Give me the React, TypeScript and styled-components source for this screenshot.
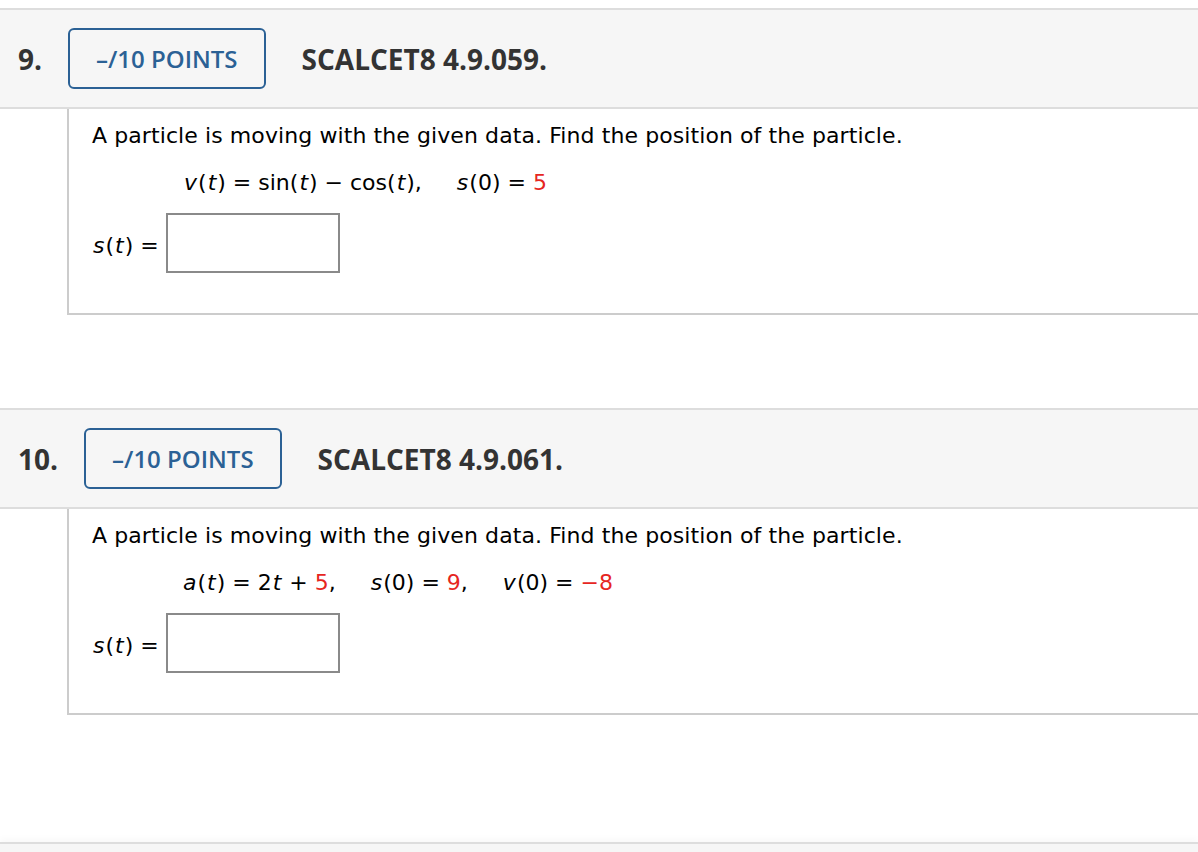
import styled, { createGlobalStyle } from "styled-components";

const GlobalStyle = createGlobalStyle`
  html, body {
    margin: 0;
    padding: 0;
    background: #ffffff;
  }
  body {
    font-family: "DejaVu Sans", Verdana, sans-serif;
  }
`;

const Page = styled.div`
  padding-top: 8px;
  min-height: 852px;
  box-sizing: border-box;
  overflow: hidden;
`;

const Question = styled.section`
  & + & {
    margin-top: 93px;
  }
`;

const Header = styled.div`
  display: flex;
  align-items: center;
  height: 97px;
  padding-left: 18px;
  background: #f6f6f6;
  border-top: 2px solid #dddddd;
  border-bottom: 2px solid #dddddd;
  font-family: "Open Sans", "Liberation Sans", sans-serif;
`;

const Number = styled.span`
  font-size: 28px;
  font-weight: 700;
  color: #333333;
  margin-right: 26px;
`;

const PointsBadge = styled.div`
  display: flex;
  align-items: center;
  height: 57px;
  padding: 0 26px;
  border: 2px solid #2b6195;
  border-radius: 6px;
  color: #2b6195;
  font-size: 24px;
  font-weight: 600;
`;

const Title = styled.span`
  margin-left: 36px;
  font-size: 28px;
  font-weight: 700;
  color: #333333;
`;

const Body = styled.div`
  margin-left: 67px;
  padding: 14px 0 40px 23px;
  border-left: 2px solid #cccccc;
  border-bottom: 2px solid #cccccc;
  color: #000000;
  font-size: 22px;
  line-height: 26px;
`;

const Prompt = styled.p`
  margin: 0;
  letter-spacing: 0.09px;
`;

const Formula = styled.div<{ $indent: number }>`
  margin: 21px 0 0 ${({ $indent }) => $indent}px;
  white-space: nowrap;
`;

// italic math variable, with a little side room as in typeset math
const V = styled.i`
  font-style: italic;
  padding: 0 1px;
`;

const Given = styled.span`
  color: #e6261f;
`;

const Sep = styled.span`
  display: inline-block;
  width: 34px;
`;

const AnswerRow = styled.div`
  display: flex;
  align-items: center;
  margin-top: 17px;
`;

const AnswerLabel = styled.span`
  padding-top: 5px;
  margin-right: 7px;
`;

const AnswerInput = styled.input`
  box-sizing: border-box;
  width: 174px;
  height: 60px;
  margin: 0;
  border: 2px solid #8a8a8a;
  background: #ffffff;
  font: inherit;
  padding: 0 8px;
  outline: none;
`;

const Footer = styled.div`
  margin-top: 127px;
  height: 40px;
  background: #f6f6f6;
  border-top: 2px solid #dddddd;
  box-shadow: 0 -4px 6px rgba(0, 0, 0, 0.025);
`;

function Answer() {
  return (
    <AnswerRow>
      <AnswerLabel>
        <V>s</V>(<V>t</V>) =
      </AnswerLabel>
      <AnswerInput type="text" aria-label="s(t)" />
    </AnswerRow>
  );
}

export default function App() {
  return (
    <Page>
      <GlobalStyle />
      <Question>
        <Header>
          <Number>9.</Number>
          <PointsBadge>–/10 POINTS</PointsBadge>
          <Title>SCALCET8 4.9.059.</Title>
        </Header>
        <Body>
          <Prompt>A particle is moving with the given data. Find the position of the particle.</Prompt>
          <Formula $indent={91}>
            <V>v</V>(<V>t</V>) = sin(<V>t</V>) − cos(<V>t</V>),<Sep />
            <V>s</V>(0) = <Given>5</Given>
          </Formula>
          <Answer />
        </Body>
      </Question>
      <Question>
        <Header>
          <Number>10.</Number>
          <PointsBadge>–/10 POINTS</PointsBadge>
          <Title>SCALCET8 4.9.061.</Title>
        </Header>
        <Body>
          <Prompt>A particle is moving with the given data. Find the position of the particle.</Prompt>
          <Formula $indent={90}>
            <V>a</V>(<V>t</V>) = 2<V>t</V> + <Given>5</Given>,<Sep />
            <V>s</V>(0) = <Given>9</Given>,<Sep />
            <V>v</V>(0) = <Given>−8</Given>
          </Formula>
          <Answer />
        </Body>
      </Question>
      <Footer />
    </Page>
  );
}
